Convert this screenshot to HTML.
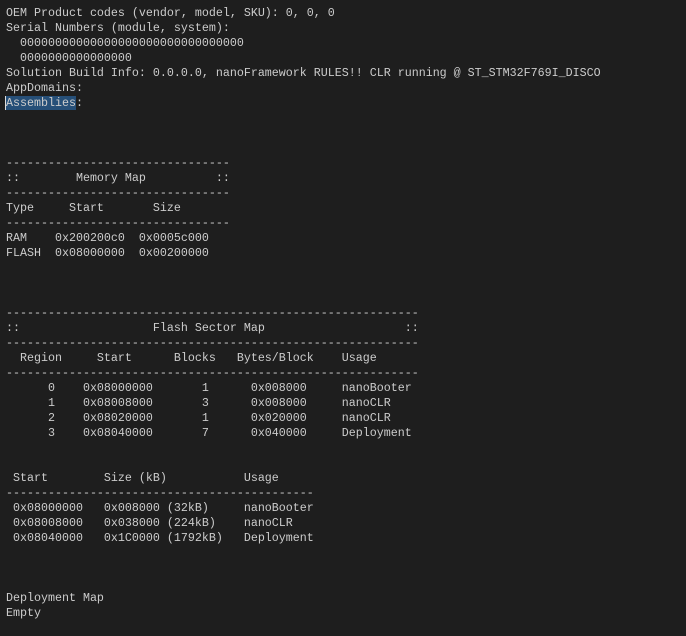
<!DOCTYPE html>
<html><head><meta charset="utf-8"><style>
html,body{margin:0;padding:0;background:#1e1e1e;width:686px;height:636px;overflow:hidden}
pre{margin:0;padding:6px 0 0 6px;font-family:"Liberation Mono",monospace;font-size:11.67px;line-height:15px;color:#cccccc;white-space:pre}
.sel{background:#264f78;border-left:1px solid #ddd;margin-left:-1px}
</style></head><body><pre>OEM Product codes (vendor, model, SKU): 0, 0, 0
Serial Numbers (module, system):
  00000000000000000000000000000000
  0000000000000000
Solution Build Info: 0.0.0.0, nanoFramework RULES!! CLR running @ ST_STM32F769I_DISCO
AppDomains:
<span class="sel">Assemblies</span>:



--------------------------------
::        Memory Map          ::
--------------------------------
Type     Start       Size
--------------------------------
RAM    0x200200c0  0x0005c000
FLASH  0x08000000  0x00200000



-----------------------------------------------------------
::                   Flash Sector Map                    ::
-----------------------------------------------------------
  Region     Start      Blocks   Bytes/Block    Usage
-----------------------------------------------------------
      0    0x08000000       1      0x008000     nanoBooter
      1    0x08008000       3      0x008000     nanoCLR
      2    0x08020000       1      0x020000     nanoCLR
      3    0x08040000       7      0x040000     Deployment


 Start        Size (kB)           Usage
--------------------------------------------
 0x08000000   0x008000 (32kB)     nanoBooter
 0x08008000   0x038000 (224kB)    nanoCLR
 0x08040000   0x1C0000 (1792kB)   Deployment



Deployment Map
Empty
</pre></body></html>
